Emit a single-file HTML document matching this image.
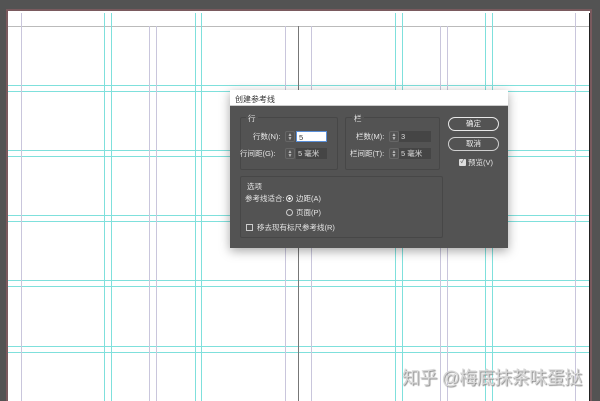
<!DOCTYPE html>
<html><head><meta charset="utf-8"><style>
*{margin:0;padding:0;box-sizing:border-box}
html,body{width:600px;height:401px;overflow:hidden}
body{background:#535353;position:relative;font-family:"Liberation Sans","Noto Sans CJK SC",sans-serif}
.abs{position:absolute}
.page{left:6px;top:9px;width:586px;height:392px;border:2px solid #7a5a5e;border-bottom:none;background:#fff}
.v{position:absolute;top:13px;height:388px;width:1px}
.h{position:absolute;left:8px;width:581px;height:1px}
.c{background:#7fe0dc}
.p{background:#c9c6dc}
.dlg{left:230px;top:90px;width:278px;height:158px;background:#535353;box-shadow:0 3px 10px rgba(0,0,0,.35);z-index:5}
.title{left:0;top:0;width:278px;height:16px;background:#fff;font-size:8px;color:#333;padding:4px 0 0 5px;border-bottom:1px solid #ccc}
.grp{position:absolute;border:1px solid #474747;border-radius:2px}
.t{position:absolute;font-size:7.5px;color:#e6e6e6;white-space:nowrap;line-height:9px}
.sp{position:absolute;width:10px;height:11px;border:1px solid #666;border-radius:2px;color:#bbb;font-size:5px;line-height:4px;text-align:center;padding-top:1px}
.fld{position:absolute;height:11px;background:#454545;color:#ddd;font-size:7.5px;padding:1px 2px;line-height:9px}
.btn{position:absolute;width:51px;height:14px;border:1.5px solid #e8e8e8;border-radius:7px;color:#eee;font-size:7.5px;text-align:center;line-height:11px}
</style></head><body>
<div class="abs page"></div>
<div class="h" style="top:26px;background:#bbb"></div>
<div class="h c" style="top:85px"></div><div class="h c" style="top:91px"></div>
<div class="h c" style="top:150px"></div><div class="h c" style="top:156px"></div>
<div class="h c" style="top:215px"></div><div class="h c" style="top:221px"></div>
<div class="h c" style="top:280px"></div><div class="h c" style="top:286px"></div>
<div class="h c" style="top:346px"></div><div class="h c" style="top:352px"></div>
<div class="v p" style="left:21px"></div>
<div class="v c" style="left:104px"></div><div class="v c" style="left:111px"></div>
<div class="v p" style="left:149px;top:26px"></div><div class="v p" style="left:156px;top:26px"></div>
<div class="v c" style="left:195px"></div><div class="v c" style="left:201px"></div>
<div class="v p" style="left:285px;top:26px"></div><div class="v" style="left:298px;top:26px;background:#777"></div><div class="v p" style="left:311px;top:26px"></div>
<div class="v c" style="left:395px"></div><div class="v c" style="left:402px"></div>
<div class="v p" style="left:440px;top:26px"></div><div class="v p" style="left:447px;top:26px"></div>
<div class="v c" style="left:485px"></div><div class="v c" style="left:492px"></div>
<div class="v p" style="left:575px"></div>
<div class="abs" style="left:589px;top:13px;width:1px;height:388px;background:#222"></div>

<div class="abs" style="left:402px;top:364px;font-size:18px;color:#d8d8d8;text-shadow:1px 1px 1px #888;letter-spacing:-0.5px">知乎 @梅底抹茶味蛋挞</div>

<div class="abs dlg">
 <div class="abs title">创建参考线</div>
 <div class="grp" style="left:10px;top:27px;width:98px;height:53px"></div>
 <div class="t" style="left:16px;top:24px;background:#535353;padding:0 2px">行</div>
 <div class="t" style="left:23px;top:42px">行数(N):</div>
 <div class="sp" style="left:55px;top:41px">▲<br>▼</div>
 <div class="fld" style="left:66px;top:41px;width:31px;background:#fff;color:#333;border:1px solid #5a8fd8">5</div>
 <div class="t" style="left:10px;top:59px">行间距(G):</div>
 <div class="sp" style="left:55px;top:58px">▲<br>▼</div>
 <div class="fld" style="left:66px;top:58px;width:31px">5 毫米</div>

 <div class="grp" style="left:115px;top:27px;width:95px;height:53px"></div>
 <div class="t" style="left:122px;top:24px;background:#535353;padding:0 2px">栏</div>
 <div class="t" style="left:126px;top:42px">栏数(M):</div>
 <div class="sp" style="left:159px;top:41px">▲<br>▼</div>
 <div class="fld" style="left:169px;top:41px;width:32px">3</div>
 <div class="t" style="left:120px;top:59px">栏间距(T):</div>
 <div class="sp" style="left:159px;top:58px">▲<br>▼</div>
 <div class="fld" style="left:169px;top:58px;width:32px">5 毫米</div>

 <div class="grp" style="left:10px;top:86px;width:203px;height:62px"></div>
 <div class="t" style="left:17px;top:92px">选项</div>
 <div class="t" style="left:15px;top:104px">参考线适合:</div>
 <div class="abs" style="left:56px;top:105px;width:7px;height:7px;border-radius:50%;border:1px solid #ddd;background:radial-gradient(#eee 35%,transparent 40%)"></div>
 <div class="t" style="left:66px;top:104px">边距(A)</div>
 <div class="abs" style="left:56px;top:119px;width:7px;height:7px;border-radius:50%;border:1px solid #ccc"></div>
 <div class="t" style="left:66px;top:118px">页面(P)</div>
 <div class="abs" style="left:16px;top:134px;width:7px;height:7px;border:1px solid #ccc"></div>
 <div class="t" style="left:27px;top:133px">移去现有标尺参考线(R)</div>

 <div class="btn" style="left:218px;top:27px">确定</div>
 <div class="btn" style="left:218px;top:47px;border-color:#cfcfcf">取消</div>
 <div class="abs" style="left:229px;top:69px;width:7px;height:7px;background:#ddd;border-radius:1px;color:#444;font-size:6px;line-height:7px;text-align:center">✓</div>
 <div class="t" style="left:238px;top:68px">预览(V)</div>
</div>
</body></html>
